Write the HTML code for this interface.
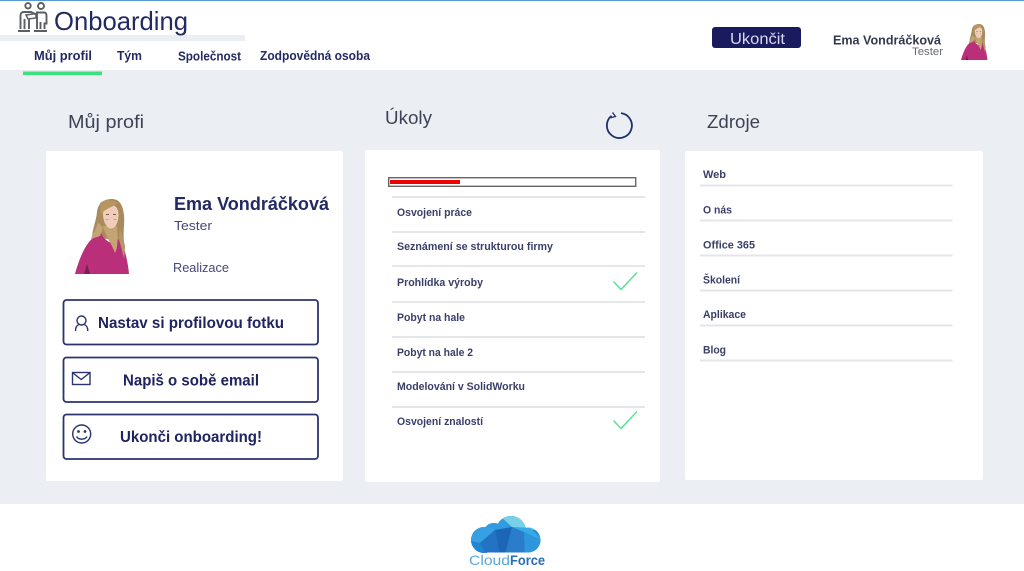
<!DOCTYPE html>
<html lang="cs">
<head>
<meta charset="utf-8">
<title>Onboarding</title>
<style>
html,body{margin:0;padding:0;background:#fff;width:1024px;height:571px;overflow:hidden}
svg{display:block;filter:blur(.35px)}
text{font-family:"Liberation Sans",sans-serif}
.b{font-weight:bold}
.tab{font-size:13px;font-weight:bold;fill:#232a63}
.h{font-size:18px;fill:#3d4355}
.t{font-size:11px;font-weight:bold;fill:#3a3f6a}
.btn{font-size:16px;font-weight:bold;fill:#1e2460}
</style>
</head>
<body>
<svg width="1024" height="571" viewBox="0 0 1024 571" xmlns="http://www.w3.org/2000/svg">
<defs>
<g id="p">
  <path d="M92 238C93 226 96 222 97 212C98 203 104 199 112 199C120 199 123 206 124 215C125 225 122 235 125 246L124 259C120 252 118 245 115 240L100 238Z" fill="#a98a5c"/>
  <path d="M75 274C78 263 84 245 93 238C97 235 100 234 101 233C104 240 112 246 117 241L120 238C124 245 128 262 129 274Z" fill="#b92f79"/>
  <path d="M84 274L87 264L90 274Z" fill="#7a1f52"/>
  <path d="M103 226C105 236 112 244 115 253C118 248 118 238 117 226Z" fill="#c4a473"/>
  <path d="M98 222C96 230 92 235 91 239L100 236L103 228Z" fill="#c4a473"/>
  <path d="M120 228L119 240C121 246 123 254 124 259C125 252 125 246 123 238Z" fill="#b5976a"/>
  <path d="M103 214C103 208 106 205 111 205C116 205 118.500 209 118.500 215C118.500 223 115 228.500 111 228.500C107 228.500 103 222 103 214Z" fill="#f0cdbb"/>
  <path d="M100 203C104 200 112 199 118 203C115 206 107 208 103 212L101 216Z" fill="#b8965f"/>
  <path d="M105 219a2.500 2.500 0 0 0 4 0zM113 219a2.500 2.500 0 0 0 4 0z" fill="#dd8f93"/>
  <path d="M106 214.500h3M113 214.500h3" stroke="#7a5a50" stroke-width="1"/>
</g>
<clipPath id="cl">
  <circle cx="484" cy="540" r="13"/>
  <circle cx="494" cy="534" r="11"/>
  <circle cx="511" cy="531" r="15"/>
  <circle cx="528" cy="540" r="12.500"/>
  <rect x="484" y="535" width="44" height="17.500"/>
</clipPath>
</defs>

<rect width="1024" height="571" fill="#fff"/>
<rect width="1024" height="1" fill="#5b9bd5"/>
<rect y="70" width="1024" height="434" fill="#ebeef3"/>
<rect y="35" width="245" height="6" fill="#ebeef3"/>

<!-- header icon -->
<g fill="none" stroke="#5d5e62" stroke-width="1.900">
  <circle cx="28" cy="5.800" r="2.700"/>
  <circle cx="41" cy="6" r="3"/>
  <path d="M20.500 29V15.500C20.500 13 22 12 24 12H31L37 15"/>
  <path d="M24.500 29V19M29 29V19"/>
  <path d="M36 12.500H44C46 12.500 46.500 14 46.500 16V23.500H44.500V29M37 12.500V29M40.500 22V29"/>
  <path d="M18 31H30M34 31H47"/>
  <path d="M26 15L36 13.500V18L28 19Z" stroke-width="1.500"/>
</g>
<text x="54" y="30" font-size="26" fill="#232a63" textLength="134" lengthAdjust="spacingAndGlyphs">Onboarding</text>

<text class="tab" x="34" y="60" textLength="58" lengthAdjust="spacingAndGlyphs">Můj profil</text>
<text class="tab" x="117" y="60" textLength="25" lengthAdjust="spacingAndGlyphs">Tým</text>
<text class="tab" x="178" y="60.500" textLength="63" lengthAdjust="spacingAndGlyphs">Společnost</text>
<text class="tab" x="260" y="60" textLength="110" lengthAdjust="spacingAndGlyphs">Zodpovědná osoba</text>
<rect x="23" y="71.500" width="79" height="3.500" fill="#3de07f"/>

<rect x="712" y="27" width="89" height="21" rx="3" fill="#1a1a5e"/>
<text x="730" y="44" font-size="16" fill="#d8d8f0" textLength="55" lengthAdjust="spacingAndGlyphs">Ukončit</text>
<text x="833" y="44.500" class="b" font-size="12.500" fill="#333a4d" textLength="108" lengthAdjust="spacingAndGlyphs">Ema Vondráčková</text>
<text x="912" y="55" font-size="11" fill="#666a75" textLength="31" lengthAdjust="spacingAndGlyphs">Tester</text>
<use href="#p" transform="translate(961 24) scale(.49 .48) translate(-75 -199)"/>

<!-- headings -->
<text class="h" x="68" y="128" textLength="76" lengthAdjust="spacingAndGlyphs">Můj profi</text>
<text class="h" x="385" y="124" textLength="47" lengthAdjust="spacingAndGlyphs">Úkoly</text>
<text class="h" x="707" y="128" textLength="53" lengthAdjust="spacingAndGlyphs">Zdroje</text>
<g fill="none" stroke="#1e2f6b" stroke-width="1.800">
  <path d="M611.500 115.800A12.500 12.500 0 1 0 621 113.100"/>
  <path d="M612.500 112.500L615.500 116.500L610.800 117.800" stroke-width="1.300"/>
</g>

<!-- cards -->
<rect x="46" y="151" width="297" height="330" rx="2" fill="#fff"/>
<rect x="365" y="150" width="295" height="332" rx="2" fill="#fff"/>
<rect x="685" y="151" width="298" height="329" rx="2" fill="#fff"/>

<!-- profile -->
<use href="#p"/>
<text x="174" y="210" class="b" font-size="18" fill="#232a63" textLength="155" lengthAdjust="spacingAndGlyphs">Ema Vondráčková</text>
<text x="174" y="230" font-size="13" fill="#444a75" textLength="38" lengthAdjust="spacingAndGlyphs">Tester</text>
<text x="173" y="272" font-size="13" fill="#444a75" textLength="56" lengthAdjust="spacingAndGlyphs">Realizace</text>

<g fill="#fff" stroke="#2c3370" stroke-width="1.800">
  <rect x="63.500" y="300" width="254.500" height="44.500" rx="3"/>
  <rect x="63.500" y="357.500" width="254.500" height="44.500" rx="3"/>
  <rect x="63.500" y="414.500" width="254.500" height="44.500" rx="3"/>
</g>
<text class="btn" x="98" y="328" textLength="186" lengthAdjust="spacingAndGlyphs">Nastav si profilovou fotku</text>
<text class="btn" x="123" y="385.500" textLength="136" lengthAdjust="spacingAndGlyphs">Napiš o sobě email</text>
<text class="btn" x="120" y="442" textLength="142" lengthAdjust="spacingAndGlyphs">Ukonči onboarding!</text>
<g fill="none" stroke="#2c3370" stroke-width="1.400">
  <circle cx="81.500" cy="320.500" r="4.500"/>
  <path d="M75.500 331C75.500 326.500 77.500 325 79 324.500M87.800 331C87.800 326.500 86 325 84 324.500"/>
  <rect x="72.500" y="372.500" width="17.500" height="12"/>
  <path d="M73 373L81.200 379.500L89.500 373"/>
  <circle cx="81.700" cy="434" r="9"/>
  <circle cx="78.500" cy="431.500" r=".7"/>
  <circle cx="85" cy="431.500" r=".7"/>
  <path d="M76.500 436.500C78.500 440 85 440 87 436.500"/>
</g>

<!-- tasks -->
<rect x="388.700" y="177.700" width="247" height="8.600" fill="#fff" stroke="#666" stroke-width="1.400"/>
<rect x="390" y="180" width="70" height="4" fill="#f00000"/>
<g fill="#e4e6ea">
  <rect x="392" y="196" width="253" height="2"/>
  <rect x="392" y="231" width="253" height="2"/>
  <rect x="392" y="265" width="253" height="2"/>
  <rect x="392" y="301" width="253" height="2"/>
  <rect x="392" y="336" width="253" height="2"/>
  <rect x="392" y="371" width="253" height="2"/>
  <rect x="392" y="406" width="253" height="2"/>
</g>
<text class="t" x="397" y="216" textLength="75" lengthAdjust="spacingAndGlyphs">Osvojení práce</text>
<text class="t" x="397" y="250" textLength="156" lengthAdjust="spacingAndGlyphs">Seznámení se strukturou firmy</text>
<text class="t" x="397" y="286" textLength="86" lengthAdjust="spacingAndGlyphs">Prohlídka výroby</text>
<text class="t" x="397" y="321" textLength="68" lengthAdjust="spacingAndGlyphs">Pobyt na hale</text>
<text class="t" x="397" y="356" textLength="76" lengthAdjust="spacingAndGlyphs">Pobyt na hale 2</text>
<text class="t" x="397" y="390" textLength="128" lengthAdjust="spacingAndGlyphs">Modelování v SolidWorku</text>
<text class="t" x="397" y="425" textLength="86" lengthAdjust="spacingAndGlyphs">Osvojení znalostí</text>
<g fill="none" stroke="#4fe08a" stroke-width="1.300">
  <path d="M613.500 281.500L621 289.500L637 272.500"/>
  <path d="M613.500 420.500L621 428.500L637 411.500"/>
</g>

<!-- resources -->
<g fill="#e4e6ea">
  <rect x="700" y="184.500" width="252.500" height="2"/>
  <rect x="700" y="219.500" width="252.500" height="2"/>
  <rect x="700" y="254.500" width="252.500" height="2"/>
  <rect x="700" y="289.500" width="252.500" height="2"/>
  <rect x="700" y="324.500" width="252.500" height="2"/>
  <rect x="700" y="359.500" width="252.500" height="2"/>
</g>
<text class="t" x="703" y="178" textLength="23" lengthAdjust="spacingAndGlyphs">Web</text>
<text class="t" x="703" y="213.500" textLength="29" lengthAdjust="spacingAndGlyphs">O nás</text>
<text class="t" x="703" y="248.500" textLength="52" lengthAdjust="spacingAndGlyphs">Office 365</text>
<text class="t" x="703" y="283.500" textLength="37" lengthAdjust="spacingAndGlyphs">Školení</text>
<text class="t" x="703" y="318" textLength="43" lengthAdjust="spacingAndGlyphs">Aplikace</text>
<text class="t" x="703" y="353.500" textLength="23" lengthAdjust="spacingAndGlyphs">Blog</text>

<!-- logo -->
<g clip-path="url(#cl)">
  <rect x="465" y="512" width="84" height="44" fill="#2a8fd6"/>
  <path d="M483 524L500 516L518 514L512 527L495 530Z" fill="#2f9be0"/>
  <path d="M500 516L518 514L530 528L512 527Z" fill="#78cfe8"/>
  <path d="M518 514L542 530L530 530Z" fill="#5cc2e8"/>
  <path d="M512 527L530 528L542 540L524 532Z" fill="#35ace6"/>
  <path d="M468 540L483 524L495 530L480 543Z" fill="#35a0e2"/>
  <path d="M468 540L480 543L486 555H468Z" fill="#1f86d2"/>
  <path d="M480 543L495 530L500 555H486Z" fill="#2372c4"/>
  <path d="M495 530L512 527L505 555H500Z" fill="#1c66b8"/>
  <path d="M512 527L524 532L525 555H505Z" fill="#2b7cca"/>
  <path d="M524 532L542 540V555H525Z" fill="#2f96dc"/>
</g>
<text x="469" y="565" font-size="14" fill="#5ba8dc" textLength="41" lengthAdjust="spacingAndGlyphs">Cloud</text>
<text x="510" y="565" font-size="14" class="b" fill="#2a6db5" textLength="35" lengthAdjust="spacingAndGlyphs">Force</text>
</svg>
</body>
</html>
